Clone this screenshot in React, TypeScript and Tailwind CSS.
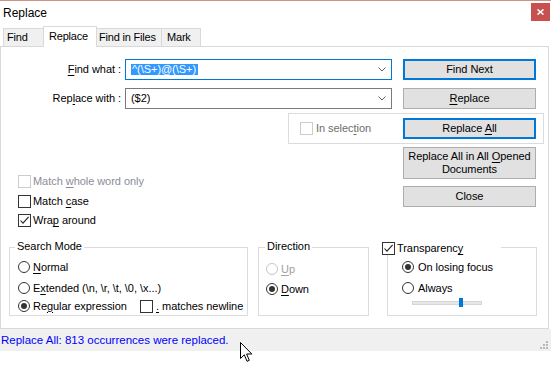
import React from "react";

function U({ children }: { children: React.ReactNode }) {
  return <span className="underline underline-offset-[2px] decoration-1">{children}</span>;
}

function Check({ checked = false, disabled = false }: { checked?: boolean; disabled?: boolean }) {
  return (
    <span
      className={`w-[13px] h-[13px] shrink-0 bg-white border flex items-center justify-center ${
        disabled ? "border-[#cccccc]" : "border-[#333333]"
      }`}
    >
      {checked && (
        <svg width="11" height="11" viewBox="0 0 11 11">
          <path d="M1.5 5.5 L4 8.2 L9.6 1.8" fill="none" stroke="#222" strokeWidth="1.1" />
        </svg>
      )}
    </span>
  );
}

function Radio({ checked = false, disabled = false }: { checked?: boolean; disabled?: boolean }) {
  return (
    <span
      className={`w-[12px] h-[12px] shrink-0 rounded-full bg-white border flex items-center justify-center ${
        disabled ? "border-[#c6c6c6]" : "border-[#333333]"
      }`}
    >
      {checked && <span className="w-[6px] h-[6px] rounded-full bg-[#333333]" />}
    </span>
  );
}

function Btn({
  children,
  primary = false,
  className = "",
}: {
  children: React.ReactNode;
  primary?: boolean;
  className?: string;
}) {
  return (
    <div
      className={`w-[133px] shrink-0 flex items-center justify-center text-center bg-[#e1e1e1] ${
        primary ? "border-2 border-[#0078d7]" : "border border-[#adadad]"
      } ${className}`}
    >
      {children}
    </div>
  );
}

function Combo({ focused = false, children }: { focused?: boolean; children: React.ReactNode }) {
  return (
    <div
      className={`w-[267px] h-[21px] shrink-0 bg-white border flex items-center ${
        focused ? "border-[#0078d7]" : "border-[#7a7a7a]"
      }`}
    >
      <div className="flex-1 pl-[5px] flex items-center">{children}</div>
      <svg width="8" height="5" viewBox="0 0 8 5" className="mr-[5px]">
        <path d="M0.5 0.5 L4 4 L7.5 0.5" fill="none" stroke="#606060" strokeWidth="1" />
      </svg>
    </div>
  );
}

export default function App() {
  return (
    <div className="w-[551px] h-[374px] bg-white relative overflow-hidden font-['Liberation_Sans',Arial,sans-serif] text-[11px] leading-[13px] tracking-[-0.05px] text-black">
      {/* title bar */}
      <div className="h-[26px] border-t border-[#d2917f] flex items-start justify-between">
        <div className="h-[25px] flex items-center pl-[3px] text-[12px] tracking-normal">Replace</div>
        <div className="w-[19px] h-[18px] mt-[2px] mr-[1px] bg-[#c75050] flex items-center justify-center">
          <svg width="7" height="6" viewBox="0 0 7 6">
            <path d="M0.5 0.5 L6.5 5.5 M6.5 0.5 L0.5 5.5" stroke="#fff" strokeWidth="1.6" />
          </svg>
        </div>
      </div>

      {/* tabs */}
      <div className="h-[20px] flex items-end pl-[3px] tracking-[-0.2px]">
        <div className="w-[40px] h-[18px] border-l border-t border-[#d9d9d9] bg-[#f0f0f0] flex items-center pl-[3px]">
          Find
        </div>
        <div className="relative z-10 w-[54px] h-[21px] -mb-[1px] border-l border-t border-r border-[#d9d9d9] bg-white flex items-center pl-[5px] pb-[1px]">
          Replace
        </div>
        <div className="w-[64px] h-[18px] border-t border-[#d9d9d9] bg-[#f0f0f0] flex items-center pl-[2px]">
          Find in Files
        </div>
        <div className="w-[40px] h-[18px] border-l border-t border-r border-[#d9d9d9] bg-[#f0f0f0] flex items-center pl-[5px]">
          Mark
        </div>
      </div>

      {/* panel */}
      <div className="w-[549px] h-[283px] border border-[#d9d9d9] bg-white flex flex-col pt-[12px]">
        {/* Find what row */}
        <div className="flex items-center h-[21px]">
          <div className="w-[124px] pr-[4px] text-right">
            <U>F</U>ind what :
          </div>
          <Combo focused>
            <span className="bg-[#3399ff] text-white leading-[11px] h-[11px] pl-[1px] pr-[2px]">^(\S+)@(\S+)</span>
          </Combo>
          <Btn primary className="ml-[11px] h-[21px]">
            Find Next
          </Btn>
        </div>

        {/* Replace with row */}
        <div className="flex items-center h-[21px] mt-[8px]">
          <div className="w-[124px] pr-[4px] text-right">
            Rep<U>l</U>ace with :
          </div>
          <Combo>
            <span>($2)</span>
          </Combo>
          <Btn className="ml-[11px] h-[21px]">
            <span>
              <U>R</U>eplace
            </span>
          </Btn>
        </div>

        {/* In selection group */}
        <div className="ml-[287px] mt-[4px] w-[256px] h-[31px] border border-[#dcdcdc] flex items-center pl-[11px]">
          <div className="w-[103px] flex items-center gap-[3px] text-[#6d6d6d]">
            <Check disabled />
            <span>
              In selec<U>t</U>ion
            </span>
          </div>
          <Btn primary className="h-[21px]">
            <span>
              Replace <U>A</U>ll
            </span>
          </Btn>
        </div>

        {/* options + buttons */}
        <div className="flex h-[83px]">
          <div className="w-[402px] pl-[17px] pt-[31px] flex flex-col">
            <div className="h-[13px] flex items-center gap-[2px] text-[#8a8d99]">
              <Check disabled />
              <span>
                Match <U>w</U>hole word only
              </span>
            </div>
            <div className="h-[13px] mt-[7px] flex items-center gap-[2px]">
              <Check />
              <span>
                Match <U>c</U>ase
              </span>
            </div>
            <div className="h-[13px] mt-[6px] flex items-center gap-[2px]">
              <Check checked />
              <span>
                Wra<U>p</U> around
              </span>
            </div>
          </div>
          <div className="pt-[3px] flex flex-col">
            <Btn className="h-[32px]">
              <span className="leading-[13px]">
                Replace All in All <U>O</U>pened
                <br />
                Documents
              </span>
            </Btn>
            <Btn className="h-[21px] mt-[7px]">Close</Btn>
          </div>
        </div>

        {/* group boxes */}
        <div className="flex mt-[20px]">
          {/* Search Mode */}
          <div className="relative ml-[8px] w-[239px] h-[69px] border border-[#dcdcdc]">
            <span className="absolute left-[5px] -top-[8px] px-[2px] bg-white">Search Mode</span>
            <div className="flex flex-col pl-[8px] pt-[13px]">
              <div className="h-[12px] flex items-center gap-[3px]">
                <Radio />
                <span>
                  <U>N</U>ormal
                </span>
              </div>
              <div className="h-[12px] mt-[9px] flex items-center gap-[3px]">
                <Radio />
                <span>
                  E<U>x</U>tended (\n, \r, \t, \0, \x...)
                </span>
              </div>
              <div className="h-[12px] mt-[6px] flex items-center">
                <Radio checked />
                <span className="ml-[3px] w-[107px]">
                  Re<U>g</U>ular expression
                </span>
                <Check />
                <span className="ml-[3px]">
                  <U>.</U> matches newline
                </span>
              </div>
            </div>
          </div>

          {/* Direction */}
          <div className="relative ml-[10px] w-[111px] h-[69px] border border-[#dcdcdc]">
            <span className="absolute left-[6px] -top-[8px] px-[2px] bg-white">Direction</span>
            <div className="flex flex-col pl-[7px] pt-[15px]">
              <div className="h-[12px] flex items-center gap-[3px] text-[#a0a0a0]">
                <Radio disabled />
                <span>
                  <U>U</U>p
                </span>
              </div>
              <div className="h-[12px] mt-[8px] flex items-center gap-[3px]">
                <Radio checked />
                <span>
                  <U>D</U>own
                </span>
              </div>
            </div>
          </div>

          {/* Transparency */}
          <div className="relative ml-[18px] w-[150px] h-[69px] border border-[#dcdcdc]">
            <div className="absolute -left-[6px] -top-[6px] w-[119px] h-[13px] bg-white flex items-center gap-[2px]">
              <Check checked />
              <span>
                Transparenc<U>y</U>
              </span>
            </div>
            <div className="flex flex-col pl-[14px] pt-[13px]">
              <div className="h-[12px] flex items-center gap-[4px]">
                <Radio checked />
                <span>On losing focus</span>
              </div>
              <div className="h-[12px] mt-[9px] flex items-center gap-[4px]">
                <Radio />
                <span>Always</span>
              </div>
              <div className="relative ml-[10px] mt-[7px] w-[70px] h-[4px] bg-[#e7e7e7] border border-[#d6d6d6]">
                <span className="absolute left-[46px] -top-[4px] w-[4px] h-[9px] bg-[#0078d7]" />
              </div>
            </div>
          </div>
        </div>
      </div>

      {/* status bar */}
      <div className="h-[22px] bg-[#f0f0f0] flex items-center justify-between pl-[1px] text-[11.5px] tracking-normal text-[#0000ff]">
        <span className="pt-[1px]">Replace All: 813 occurrences were replaced.</span>
        <svg width="9" height="9" viewBox="0 0 9 9" className="self-end mb-[1px] mr-[2px]">
          <rect x="6" y="0" width="2" height="2" fill="#b8b8b8" />
          <rect x="3" y="3" width="2" height="2" fill="#b8b8b8" />
          <rect x="6" y="3" width="2" height="2" fill="#b8b8b8" />
          <rect x="0" y="6" width="2" height="2" fill="#b8b8b8" />
          <rect x="3" y="6" width="2" height="2" fill="#b8b8b8" />
          <rect x="6" y="6" width="2" height="2" fill="#b8b8b8" />
        </svg>
      </div>

      {/* mouse cursor */}
      <svg
        width="13"
        height="21"
        viewBox="0 0 13 21"
        className="absolute left-[240px] top-[342px]"
      >
        <path
          d="M0.5 0.5 L0.5 16.5 L4.3 12.8 L7 19.3 L9.3 18.3 L6.6 12 L11.8 12 Z"
          fill="#fff"
          stroke="#000"
          strokeWidth="1"
          strokeLinejoin="miter"
        />
      </svg>
    </div>
  );
}
